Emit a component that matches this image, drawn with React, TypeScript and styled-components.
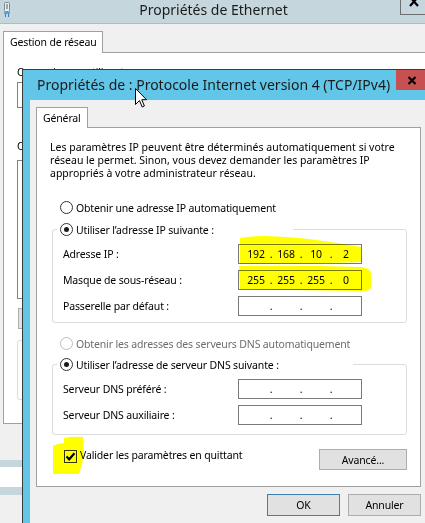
import React from 'react';
import styled, { createGlobalStyle } from 'styled-components';

const FONT = `"Noto Sans", "Open Sans", sans-serif`;

const GlobalStyle = createGlobalStyle`
  html, body { margin: 0; padding: 0; background: #f0f0f0; }
  body { font-family: ${FONT}; font-size: 10.5px; letter-spacing: -0.15px; color: #000; overflow: hidden; }
  * { box-sizing: border-box; }
`;

const Screen = styled.div`
  position: relative;
  width: 425px;
  height: 523px;
  overflow: hidden;
  background: #f0f0f0;
`;

/* ---------- background window (Propriétés de Ethernet) ---------- */
const BackWindow = styled.div`
  width: 427px;
  display: flex;
  flex-direction: column;
`;

const BackTitleBar = styled.div`
  height: 24px;
  background: #c6d6dd;
  border-bottom: 1px solid #aebdc3;
  display: grid;
  grid-template-columns: 1fr auto 1fr;
  align-items: start;
`;

const BackIcon = styled.svg`
  margin: 2px 0 0 3px;
`;

const BackTitle = styled.div`
  font-size: 14px;
  letter-spacing: 0;
  line-height: 19px;
  color: #1b1b1b;
`;

const BackClose = styled.div`
  justify-self: end;
  width: 27px;
  height: 15px;
  border-left: 1px solid #6e6e6e;
  border-bottom: 1px solid #6e6e6e;
  display: flex;
  justify-content: center;
`;

const BackBody = styled.div`
  display: flex;
  flex-direction: column;
  padding: 7px 0 0 3px;
`;

const BackTab = styled.div`
  width: 100px;
  height: 22px;
  margin-bottom: -1px;
  position: relative;
  z-index: 1;
  background: #fff;
  border: 1px solid #a0a0a0;
  border-bottom: none;
  padding-left: 6px;
  line-height: 20px;
  white-space: nowrap;
`;

const BackPanel = styled.div`
  height: 372px;
  background: #fff;
  border: 1px solid #a0a0a0;
  padding: 0 0 0 13px;
  display: flex;
  flex-direction: column;
`;

const BackLabel = styled.div<{ $mt: number }>`
  margin-top: ${p => p.$mt}px;
  line-height: 13px;
  white-space: nowrap;
`;

const BackBox = styled.div<{ $mt: number; $h: number; $kind?: 'list' | 'button' | 'group' }>`
  margin-top: ${p => p.$mt}px;
  height: ${p => p.$h}px;
  width: 200px;
  flex: none;
  border: 1px solid ${p => (p.$kind === 'group' ? '#dcdcdc' : p.$kind === 'button' ? '#adadad' : '#828282')};
  border-radius: ${p => (p.$kind === 'group' ? 3 : 0)}px;
  background: ${p => (p.$kind === 'button' ? '#e1e1e1' : '#fff')};
  margin-left: ${p => (p.$kind === 'button' ? 1 : 0)}px;
`;

const BackStrip = styled.div`
  margin: 36px 0 0 -3px;
  height: 35px;
  background: #fff;
  border-top: 7px solid #c6d6dd;
  border-bottom: 8px solid #c6d6dd;
`;

/* ---------- foreground dialog ---------- */
const Dialog = styled.div`
  position: absolute;
  left: 22px;
  top: 69px;
  width: 413px;
  height: 470px;
  border: 1px solid #3a3a3a;
  background: #62c6e8;
  padding: 0 7px 7px 7px;
  display: flex;
  flex-direction: column;
  z-index: 2;
`;

const DialogTitleBar = styled.div`
  height: 30px;
  flex: none;
  display: flex;
  align-items: flex-start;
  justify-content: space-between;
`;

const DialogTitle = styled.div`
  font-size: 14px;
  letter-spacing: 0;
  line-height: 30px;
  padding-left: 7px;
  color: #1b1b1b;
  white-space: nowrap;
`;

const CloseButton = styled.div`
  width: 31px;
  height: 20px;
  flex: none;
  background: #c75050;
  display: flex;
  align-items: center;
  justify-content: center;
`;

const DialogBody = styled.div`
  flex: 1;
  background: #f0f0f0;
  padding: 7px 6px 0 6px;
  display: flex;
  flex-direction: column;
`;

const TabHeader = styled.div`
  align-self: flex-start;
  width: 52px;
  height: 21px;
  margin-bottom: -1px;
  position: relative;
  z-index: 1;
  background: #fff;
  border: 1px solid #a0a0a0;
  border-bottom: none;
  padding-left: 6px;
  line-height: 20px;
`;

const TabPanel = styled.div`
  height: 360px;
  flex: none;
  background: #fff;
  border: 1px solid #a0a0a0;
  padding: 13px 13px 0 13px;
  display: flex;
  flex-direction: column;
`;

const Intro = styled.p`
  margin: 0;
  line-height: 13px;
  letter-spacing: 0;
  white-space: pre;
`;

const RadioRow = styled.label<{ $mt?: number; $disabled?: boolean; $indent?: number }>`
  display: flex;
  align-items: center;
  gap: 3px;
  height: 17px;
  margin-top: ${p => p.$mt ?? 0}px;
  padding-left: ${p => p.$indent ?? 10}px;
  color: ${p => (p.$disabled ? '#6d6d6d' : '#000')};
  white-space: nowrap;
`;

const RadioCircle = styled.span<{ $checked?: boolean; $disabled?: boolean }>`
  width: 13px;
  height: 13px;
  flex: none;
  border-radius: 50%;
  border: 1px solid ${p => (p.$disabled ? '#bcbcbc' : '#333')};
  background: #fff;
  display: flex;
  align-items: center;
  justify-content: center;
  &::after {
    content: '';
    width: 5px;
    height: 5px;
    border-radius: 50%;
    background: #1a1a1a;
    display: ${p => (p.$checked ? 'block' : 'none')};
  }
`;

const Group = styled.fieldset<{ $mt: number; $pt: number; $pb: number }>`
  margin: ${p => p.$mt}px 0 0 2px;
  min-width: 0;
  border: 1px solid #dcdcdc;
  border-radius: 3px;
  padding: ${p => p.$pt}px 0 ${p => p.$pb}px 4px;
  display: flex;
  flex-direction: column;
  gap: 6px;
`;

const Legend = styled.legend<{ $w: number }>`
  width: ${p => p.$w}px;
  padding: 0 0 0 3px;
`;

const FieldRow = styled.div`
  display: flex;
  align-items: center;
  height: 20px;
  margin-left: 6px;
`;

const FieldLabel = styled.span`
  width: 175px;
  flex: none;
  white-space: nowrap;
`;

const IPBox = styled.div`
  width: 124px;
  height: 20px;
  border: 1px solid #7a7a7a;
  background: #fff;
  padding-left: 4px;
  display: grid;
  grid-template-columns: 26px 4px 26px 4px 26px 4px 26px;
  align-items: center;
  line-height: 18px;
`;

const Octet = styled.span`
  text-align: center;
`;

const Dot = styled.span`
  text-align: center;
`;

const BottomRow = styled.div`
  margin-top: 14px;
  display: flex;
  justify-content: space-between;
  align-items: flex-start;
`;

const CheckRow = styled.label`
  display: flex;
  align-items: flex-start;
  gap: 3px;
  padding-left: 14px;
  line-height: 13px;
  white-space: nowrap;
`;

const CheckBox = styled.span`
  width: 13px;
  height: 13px;
  margin-top: 1px;
  flex: none;
  border: 1px solid #333;
  background: #fff;
  display: flex;
  align-items: center;
  justify-content: center;
`;

const Button = styled.button<{ $w: number; $default?: boolean }>`
  width: ${p => p.$w}px;
  height: ${p => (p.$default !== undefined ? 22 : 21)}px;
  padding: 0;
  font-family: ${FONT};
  font-size: 10.5px;
  letter-spacing: -0.15px;
  color: #000;
  background: #e1e1e1;
  border: 1px solid ${p => (p.$default ? '#3c7fb1' : '#adadad')};
  border-radius: 0;
`;

const ButtonRow = styled.div`
  margin-top: 7px;
  display: flex;
  justify-content: flex-end;
  gap: 8px;
`;

/* ---------- overlays (annotation & cursor) ---------- */
const Annotation = styled.svg`
  position: absolute;
  left: 0;
  top: 0;
  z-index: 3;
  pointer-events: none;
  mix-blend-mode: multiply;
`;

const Cursor = styled.svg`
  position: absolute;
  left: 135px;
  top: 88px;
  z-index: 4;
  pointer-events: none;
`;

type IPProps = { value?: [string, string, string, string] };
const IPField = ({ value }: IPProps) => (
  <IPBox>
    <Octet>{value?.[0]}</Octet>
    <Dot>.</Dot>
    <Octet>{value?.[1]}</Octet>
    <Dot>.</Dot>
    <Octet>{value?.[2]}</Octet>
    <Dot>.</Dot>
    <Octet>{value?.[3]}</Octet>
  </IPBox>
);

type RadioProps = { label: string; checked?: boolean; disabled?: boolean; mt?: number; indent?: number };
const Radio = ({ label, checked, disabled, mt, indent }: RadioProps) => (
  <RadioRow $mt={mt} $disabled={disabled} $indent={indent}>
    <RadioCircle $checked={checked} $disabled={disabled} />
    {label}
  </RadioRow>
);

export default function App() {
  return (
    <>
      <GlobalStyle />
      <Screen>
        <BackWindow>
          <BackTitleBar>
            <BackIcon width="8" height="15" viewBox="0 0 8 15">
              <rect x="1.5" y="0.5" width="5" height="9" rx="1" fill="#e8eef1" stroke="#7d8a90" />
              <rect x="3" y="2" width="2" height="5" fill="#9aa6ab" />
              <rect x="1" y="10" width="6" height="2" fill="#5d9fd6" />
              <rect x="2" y="12" width="1" height="3" fill="#2f7ec4" />
              <rect x="5" y="12" width="1" height="3" fill="#2f7ec4" />
            </BackIcon>
            <BackTitle>Propriétés de Ethernet</BackTitle>
            <BackClose>
              <svg width="12" height="8" viewBox="0 0 12 8">
                <path d="M2 -3 L10 6 M10 -3 L2 6" stroke="#000" strokeWidth="2.2" />
              </svg>
            </BackClose>
          </BackTitleBar>
          <BackBody>
            <BackTab>Gestion de réseau</BackTab>
            <BackPanel>
              <BackLabel $mt={13}>Connexion en utilisant :</BackLabel>
              <BackBox $mt={3} $h={26} />
              <BackLabel $mt={32}>Cette connexion utilise les éléments suivants :</BackLabel>
              <BackBox $mt={7} $h={139} $kind="list" />
              <BackBox $mt={9} $h={21} $kind="button" />
              <BackBox $mt={11} $h={60} $kind="group" />
            </BackPanel>
            <BackStrip />
          </BackBody>
        </BackWindow>

        <Dialog>
          <DialogTitleBar>
            <DialogTitle>Propriétés de : Protocole Internet version 4 (TCP/IPv4)</DialogTitle>
            <CloseButton>
              <svg width="10" height="9" viewBox="0 0 10 9">
                <path d="M1.5 1 L8.5 8 M8.5 1 L1.5 8" stroke="#000" strokeWidth="2.2" />
              </svg>
            </CloseButton>
          </DialogTitleBar>
          <DialogBody>
            <TabHeader>Général</TabHeader>
            <TabPanel>
              <Intro>
                {'Les paramètres IP peuvent être déterminés automatiquement si votre\nréseau le permet. Sinon, vous devez demander les paramètres IP\nappropriés à votre administrateur réseau.'}
              </Intro>
              <Radio label="Obtenir une adresse IP automatiquement" mt={19} />
              <Group $mt={5} $pt={6} $pb={6}>
                <Legend $w={236}>
                  <Radio label="Utiliser l’adresse IP suivante :" checked indent={0} />
                </Legend>
                <FieldRow>
                  <FieldLabel>Adresse IP :</FieldLabel>
                  <IPField value={['192', '168', '10', '2']} />
                </FieldRow>
                <FieldRow>
                  <FieldLabel>Masque de sous-réseau :</FieldLabel>
                  <IPField value={['255', '255', '255', '0']} />
                </FieldRow>
                <FieldRow>
                  <FieldLabel>Passerelle par défaut :</FieldLabel>
                  <IPField />
                </FieldRow>
              </Group>
              <Radio label="Obtenir les adresses des serveurs DNS automatiquement" disabled mt={12} />
              <Group $mt={4} $pt={6} $pb={9}>
                <Legend $w={296}>
                  <Radio label="Utiliser l’adresse de serveur DNS suivante :" checked indent={0} />
                </Legend>
                <FieldRow>
                  <FieldLabel>Serveur DNS préféré :</FieldLabel>
                  <IPField />
                </FieldRow>
                <FieldRow>
                  <FieldLabel>Serveur DNS auxiliaire :</FieldLabel>
                  <IPField />
                </FieldRow>
              </Group>
              <BottomRow>
                <CheckRow>
                  <CheckBox>
                    <svg width="11" height="11" viewBox="0 0 11 11">
                      <path d="M1.5 5.5 L4.2 8.3 L9.5 2.2" fill="none" stroke="#000" strokeWidth="2.2" />
                    </svg>
                  </CheckBox>
                  Valider les paramètres en quittant
                </CheckRow>
                <Button $w={88}>Avancé...</Button>
              </BottomRow>
            </TabPanel>
            <ButtonRow>
              <Button $w={73} $default>OK</Button>
              <Button $w={73} $default={false}>Annuler</Button>
            </ButtonRow>
          </DialogBody>
        </Dialog>

        <Annotation width="425" height="523" viewBox="0 0 425 523">
          <path
            d="M240 238 Q250 236 265 236 Q300 237 330 242 Q352 245 361 247 L362 262 Q300 264 240 264 Z"
            fill="#ffff00"
          />
          <path
            d="M239 266 Q300 265 362 267 Q371 268 371 275 L371 288 Q370 291 362 291 Q300 290 240 289 Z"
            fill="#ffff00"
          />
          <path
            d="M64 438 Q72 436 83 437 L84 455 Q82 466 79 474 L53 474 L53 446 Q58 443 64 443 Z"
            fill="#ffff00"
          />
        </Annotation>

        <Cursor width="12" height="21" viewBox="0 0 12 21">
          <path
            d="M0.5 0.5 L0.5 16.5 L4.5 12.5 L7.2 19 L9.4 18 L6.8 11.7 L11.5 11.7 Z"
            fill="#fff"
            stroke="#000"
            strokeWidth="1"
            strokeLinejoin="miter"
          />
        </Cursor>
      </Screen>
    </>
  );
}
